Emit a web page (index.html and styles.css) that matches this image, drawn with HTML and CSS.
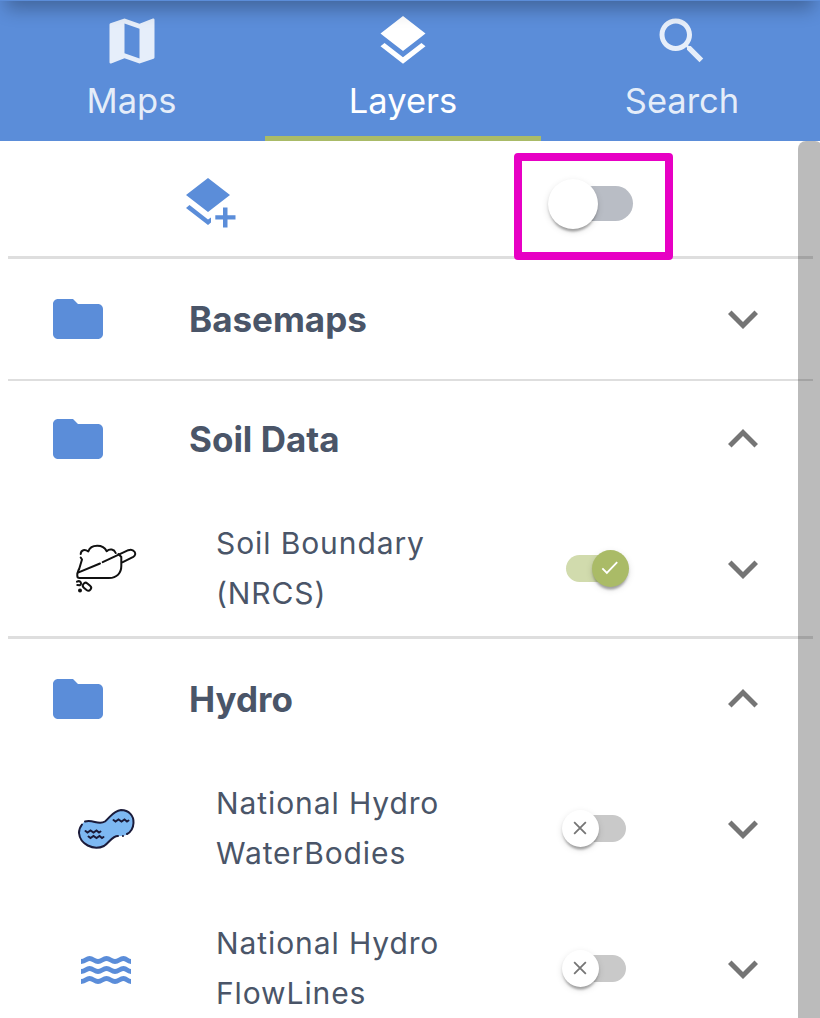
FILE: index.html
```html
<!DOCTYPE html>
<html lang="en">
<head>
    <meta charset="UTF-8">
    <meta name="viewport" content="width=device-width, initial-scale=1.0">
    <title>Layers</title>
    <link rel="stylesheet" href="styles.css">
</head>
<body>
    <!-- Shared icons -->
    <svg class="icon-defs" width="0" height="0">
        <symbol id="folder" viewBox="0 0 24 24"><path d="M10 4H4c-1.1 0-2 .9-2 2v12c0 1.1.9 2 2 2h16c1.1 0 2-.9 2-2V8c0-1.1-.9-2-2-2h-8l-2-2z"/></symbol>
        <symbol id="expand-more" viewBox="0 0 24 24"><path d="M16.59 8.59 12 13.17 7.41 8.59 6 10l6 6 6-6z"/></symbol>
        <symbol id="expand-less" viewBox="0 0 24 24"><path d="m12 8-6 6 1.41 1.41L12 10.83l4.59 4.58L18 14z"/></symbol>
    </svg>

    <div class="panel">
        <div class="app-bar"></div>
        <nav class="tabs">
            <div class="tab">
                <svg class="icon" viewBox="0 0 24 24"><path d="m20.5 3-.16.03L15 5.1 9 3 3.36 4.9c-.21.07-.36.25-.36.48V20.5c0 .28.22.5.5.5l.16-.03L9 18.9l6 2.1 5.64-1.9c.21-.07.36-.25.36-.48V3.5c0-.28-.22-.5-.5-.5zM15 19l-6-2.11V5l6 2.11V19z"/></svg>
                <span class="tab-label">Maps</span>
            </div>
            <div class="tab active">
                <svg class="icon" viewBox="0 0 24 24"><path d="m11.99 18.54-7.37-5.73L3 14.07l9 7 9-7-1.63-1.27-7.38 5.74zM12 16l7.36-5.73L21 9l-9-7-9 7 1.63 1.27L12 16z"/></svg>
                <span class="tab-label">Layers</span>
            </div>
            <div class="tab">
                <svg class="icon" viewBox="0 0 24 24"><path d="M15.5 14h-.79l-.28-.27C15.41 12.59 16 11.11 16 9.5 16 5.91 13.09 3 9.5 3S3 5.91 3 9.5 5.91 16 9.5 16c1.61 0 3.09-.59 4.23-1.57l.27.28v.79l5 4.99L20.49 19l-4.99-5zm-6 0C7.01 14 5 11.99 5 9.5S7.01 5 9.5 5 14 7.01 14 9.5 11.99 14 9.5 14z"/></svg>
                <span class="tab-label">Search</span>
            </div>
        </nav>

        <main class="layer-list">
            <div class="toolbar">
                <svg class="add-layer" viewBox="0 0 52 52">
                    <path d="M23 1 45 18 23 35 1 18zM1 31l3.500-3L23 42.500l3-2v5L23 48zM38 30.500h4.500v7.700h8v4.400h-8v7.900H38v-7.900h-7.700v-4.400H38z"/>
                </svg>
                <div class="switch switch-large">
                    <div class="track"></div>
                    <div class="thumb"></div>
                    <div class="highlight"></div>
                </div>
            </div>

            <section class="group">
                <div class="group-header">
                    <svg class="icon folder"><use href="#folder"/></svg>
                    <h2 class="group-name">Basemaps</h2>
                    <svg class="icon chevron"><use href="#expand-more"/></svg>
                </div>
            </section>

            <section class="group group-soil">
                <div class="group-header">
                    <svg class="icon folder"><use href="#folder"/></svg>
                    <h2 class="group-name">Soil Data</h2>
                    <svg class="icon chevron"><use href="#expand-less"/></svg>
                </div>
                <div class="layer">
                    <svg class="layer-icon" viewBox="0 0 60 60" fill="none" stroke="#111" stroke-width="2" stroke-linecap="round" stroke-linejoin="round">
                        <path d="M4.700 15c.3-4 4-5 7.600-2.500C15 5 27 5 30.700 12.200c3-3 7.500-2 9 1.800"/>
                        <path d="M4.700 18.500 6 20.500l-3 10M2 33.700l22-9.200M26.700 23.200l25.600-12c5.500-2 9.500 4 5 6.700l-11 5.400"/>
                        <path d="M2.700 30.500 1.300 34.500v2.200c0 1.500.7 2.300 2.200 2.300H33c8 0 12.300-5 12.300-12v-9l-2.800-3"/>
                        <path d="M1 42.700c3.500-2 5.500 2.500 2.700 3.500l-2.400-.2"/>
                        <rect x="6.500" y="45" width="9" height="5.500" rx="2.700" transform="rotate(40 11 47.700)"/>
                        <circle cx="4" cy="51.500" r="1"/>
                    </svg>
                    <span class="layer-name">Soil Boundary (NRCS)</span>
                    <div class="switch on">
                        <div class="track"></div>
                        <div class="thumb">
                            <svg class="mark" viewBox="0 0 20 20"><path d="m1.500 10.500 5 5L18 3.500"/></svg>
                        </div>
                    </div>
                    <svg class="icon chevron"><use href="#expand-more"/></svg>
                </div>
            </section>

            <section class="group">
                <div class="group-header">
                    <svg class="icon folder"><use href="#folder"/></svg>
                    <h2 class="group-name">Hydro</h2>
                    <svg class="icon chevron"><use href="#expand-less"/></svg>
                </div>
                <div class="layer">
                    <svg class="layer-icon" viewBox="0 0 60 60" fill="none" stroke="#1b1b3a" stroke-width="2" stroke-linecap="round">
                        <path fill="#7db8f2" stroke="none" d="M8 23c8-3 14 4 21-1 6-5 8-10 16-11 8 0 13 6 12.500 13C57 32 53 37 45 37c-9 0-10 6-17 10C17 52 4 45 3 34c0-5 2-8 5-11z"/>
                        <path d="M9 22.500c8-2.500 13 4 20 0 6-5 8-10.500 16-11.500 8 0 13 6 12.500 13-.3 5-2.500 9-6.500 11M47 37h-.1M42 37c-6 0-8 6-14 10C17 52 4 45 3 34c0-4 1-6 3-8.500"/>
                        <path d="m37.500 21 2 1.500 3-2 3 2 3-2 2.500 2 1.500-1M9.500 32l2 1.500 3-2 3 2 3-2 2.500 2 1.500-1M12.500 37.500l2 1.500 3-2 3 2 3-2 2.500 2 1.500-1"/>
                    </svg>
                    <span class="layer-name">National Hydro WaterBodies</span>
                    <div class="switch">
                        <div class="track"></div>
                        <div class="thumb">
                            <svg class="mark" viewBox="0 0 20 20"><path d="m3.500 3.500 13 13m0-13-13 13"/></svg>
                        </div>
                    </div>
                    <svg class="icon chevron"><use href="#expand-more"/></svg>
                </div>
                <div class="layer">
                    <svg class="layer-icon" viewBox="0 0 60 60" fill="none" stroke="#5b8dd9" stroke-width="4.800">
                        <path d="M5 22.500c5 0 5-3 8.500-3s5 3 8.500 3 5-3 8.500-3 5 3 8.500 3 5-3 8.500-3 3.500 3 7.500 3M5 32.500c5 0 5-3 8.500-3s5 3 8.500 3 5-3 8.500-3 5 3 8.500 3 5-3 8.500-3 3.500 3 7.500 3M5 42.500c5 0 5-3 8.500-3s5 3 8.500 3 5-3 8.500-3 5 3 8.500 3 5-3 8.500-3 3.500 3 7.500 3"/>
                    </svg>
                    <span class="layer-name">National Hydro FlowLines</span>
                    <div class="switch">
                        <div class="track"></div>
                        <div class="thumb">
                            <svg class="mark" viewBox="0 0 20 20"><path d="m3.500 3.500 13 13m0-13-13 13"/></svg>
                        </div>
                    </div>
                    <svg class="icon chevron"><use href="#expand-more"/></svg>
                </div>
            </section>
        </main>
        <div class="scrollbar"></div>
    </div>
</body>
</html>
```
FILE: styles.css
```css
* {
    box-sizing: border-box;
}

body {
    margin: 0;
    background-color: #fff;
    color: #4a5568;
    font-family: Inter, sans-serif;
}

.icon-defs {
    position: absolute;
}

.panel {
    position: relative;
    height: 1018px;
    overflow: hidden;
}

/* bottom edge of the bar above, casts its shadow on the tabs */
.app-bar {
    position: absolute;
    top: -60px;
    left: 0;
    width: 100%;
    height: 61px;
    background-color: #5b8dd9;
    z-index: 2;
    box-shadow: 0 14px 18px -6px rgba(0, 0, 0, 0.28);
}

.icon {
    display: block;
    flex: none;
    width: 60px;
    height: 60px;
    fill: currentColor;
}

.tabs {
    display: grid;
    grid-template-columns: 265px 276px 1fr;
    height: 141px;
    background-color: #5b8dd9;
}

.tab {
    display: flex;
    flex-direction: column;
    align-items: center;
    padding-top: 11px;
    color: rgba(255, 255, 255, 0.85);
    border-bottom: 5px solid transparent;
}

.tab:first-child {
    padding-right: 2px;
}

.tab:last-child {
    padding-left: 3px;
}

.tab.active {
    color: #fff;
    border-bottom-color: #aabb67;
}

.tab-label {
    font-size: 34.5px;
    line-height: 60px;
}

.layer-list {
    margin: 0 7px 0 8px;
}

.toolbar {
    display: flex;
    align-items: center;
    height: 118px;
    padding: 8px 180px 0 177px;
    border-bottom: 3px solid #dedede;
}

.add-layer {
    width: 52px;
    height: 52px;
    fill: #5b8dd9;
}

.group {
    border-bottom: 2px solid #dedede;
}

.group-header,
.layer {
    display: flex;
    align-items: center;
    padding-right: 40px;
}

.group-header {
    height: 120px;
    padding-left: 40px;
}

.group-soil {
    border-bottom-width: 3px;
}

.group-soil .group-header {
    height: 118px;
    padding-bottom: 2px;
}

.group-soil .layer {
    height: 137px;
    padding-top: 3px;
}

.folder {
    color: #5b8dd9;
}

.group-name {
    flex: 1;
    margin: 0 0 1px 81px;
    font-size: 35px;
    font-weight: 650;
    line-height: 50px;
}

.layer {
    height: 140px;
    padding-left: 68px;
}

.layer-icon {
    flex: none;
    width: 60px;
    height: 60px;
    overflow: visible;
}

.layer-name {
    width: 260px;
    margin: 0 0 2px 80px;
    font-size: 30px;
    line-height: 50px;
    letter-spacing: 0.9px;
}

.chevron {
    margin-left: auto;
    color: #757575;
}

.switch {
    position: relative;
    display: flex;
    align-items: center;
    width: 64px;
    height: 37px;
    margin: 0 0 1px 86px;
}

.track {
    width: 59px;
    height: 27px;
    margin-left: auto;
    border-radius: 14px;
    background-color: #c9c9c9;
}

.thumb {
    position: absolute;
    left: 0;
    top: 0;
    display: flex;
    align-items: center;
    justify-content: center;
    width: 37px;
    height: 37px;
    border-radius: 50%;
    background-color: #fff;
    box-shadow: 0 5px 2.5px -2.5px rgba(0, 0, 0, 0.2),
        0 2.5px 2.5px 0 rgba(0, 0, 0, 0.14),
        0 2.5px 7.5px 0 rgba(0, 0, 0, 0.12);
}

.mark {
    width: 18px;
    height: 18px;
    margin: 0 1px 1px 0;
    fill: none;
    stroke: #757575;
    stroke-width: 2;
}

.switch.on {
    width: 63px;
    margin-left: 90px;
}

.on .track {
    margin-left: 0;
    background-color: #d1dbad;
}

.on .thumb {
    left: auto;
    right: 0;
    background-color: #aabb67;
}

.on .mark {
    stroke: #fff;
}

.switch-large {
    width: 85px;
    height: 50px;
    margin: 2px 0 0 auto;
}

.switch-large .track {
    width: 80px;
    height: 35px;
    border-radius: 18px;
    background-color: #b9bdc5;
}

.switch-large .thumb {
    width: 50px;
    height: 50px;
}

.highlight {
    position: absolute;
    top: -26px;
    left: -34px;
    width: 159px;
    height: 107px;
    border: 8px solid #e700c4;
    border-radius: 4px;
}

.scrollbar {
    position: absolute;
    top: 141px;
    right: -3px;
    bottom: 0;
    width: 25px;
    border-radius: 8px 8px 0 0;
    background-color: rgba(0, 0, 0, 0.265);
}
```
